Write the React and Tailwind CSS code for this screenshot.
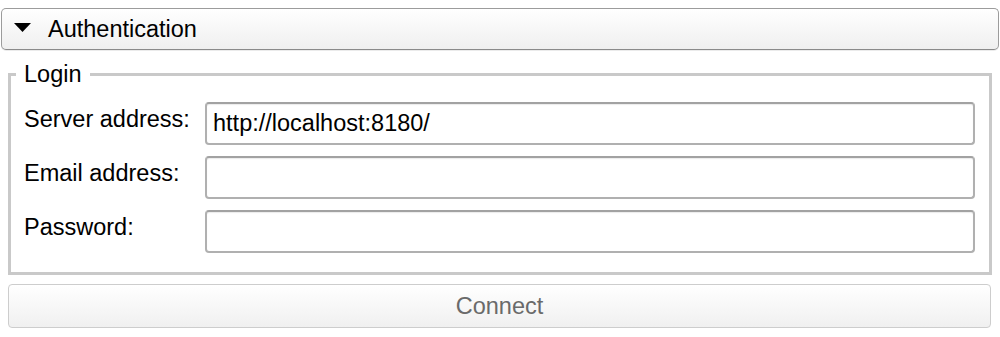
import React from "react";

export default function App() {
  const font = { fontFamily: '"Liberation Sans", Arial, Helvetica, sans-serif' };
  return (
    <div className="w-[1000px] h-[337px] bg-white overflow-hidden text-[23.5px] text-black" style={font}>
      <div className="pt-[8px] px-[1px]">
        <div className="h-[42px] flex items-center border border-[#9c9c9c] border-b-[#8a8a8a] rounded-[5px] bg-gradient-to-b from-white to-[#efefef] shadow-[0_1px_0_rgba(0,0,0,0.08)]">
          <svg width="17" height="9" viewBox="0 0 17 9" className="ml-[12px] mr-[17px] -mt-[4px]">
            <polygon points="0,0 17,0 8.5,9" fill="#000" />
          </svg>
          <span className="leading-[27px]">Authentication</span>
        </div>
      </div>

      <fieldset className="mx-[8px] mt-[11px] border-[3px] border-[#c9c9c9] pl-[13px] pr-[14px] pt-[14px] pb-[19px] m-0 min-w-0">
        <legend className="px-[8px] -ml-[8px] leading-[27px]">Login</legend>
        <div className="flex flex-col gap-[11px]">
          {[
            { label: "Server address:", value: "http://localhost:8180/" },
            { label: "Email address:", value: "" },
            { label: "Password:", value: "" },
          ].map((r) => (
            <div key={r.label} className="flex items-start">
              <div className="w-[181px] pt-[4px] leading-[27px] shrink-0">{r.label}</div>
              <div className="w-[770px] h-[43px] flex items-center border-2 border-[#b0b0b0] border-t-[#a2a2a2] rounded-[4px] bg-white px-[6px] shadow-[inset_0_1px_1px_rgba(0,0,0,0.08)]">
                <span className="leading-[27px]">{r.value}</span>
              </div>
            </div>
          ))}
        </div>
      </fieldset>

      <div className="px-[8px] pr-[9px] mt-[9px]">
        <div className="h-[44px] flex items-center justify-center border border-[#cdcdcd] rounded-[4px] bg-gradient-to-b from-white to-[#f0f0f0] text-[#6a6a6a]">
          <span className="leading-[27px]">Connect</span>
        </div>
      </div>
    </div>
  );
}
